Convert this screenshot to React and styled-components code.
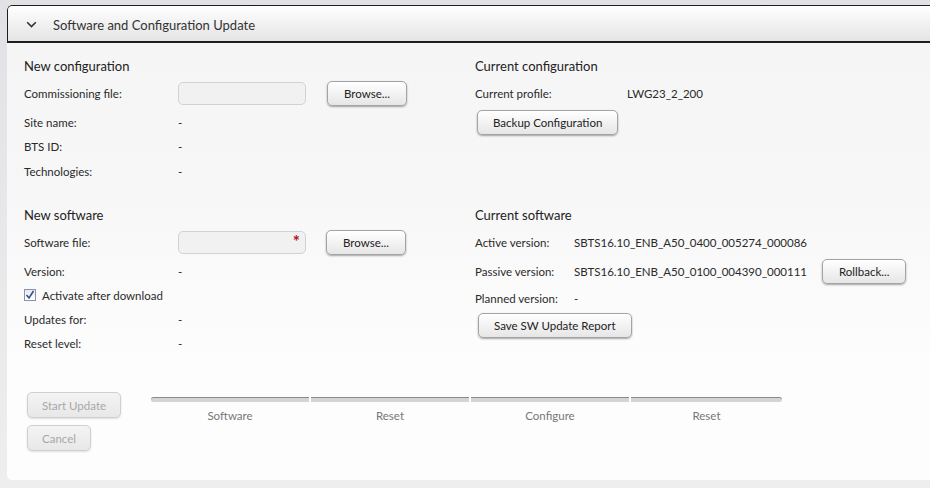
import React from "react";
import styled, { createGlobalStyle } from "styled-components";

const Global = createGlobalStyle`
  html, body { margin: 0; padding: 0; }
  body {
    background: linear-gradient(#e2e2e6, #eeeeee);
    font-family: Lato, "Open Sans", sans-serif;
    width: 930px; height: 488px; overflow: hidden;
  }
`;

const Page = styled.div`
  padding: 5px 0 0 7px;
`;

const Panel = styled.section`
  width: 940px;
  border-radius: 5px 0 0 5px;
  background: linear-gradient(#f5f5f5 0%, #f7f7f7 40%, #fdfdfd 75%, #fdfdfd 100%);
  overflow: hidden;
`;

const Header = styled.header`
  box-sizing: border-box;
  height: 38px;
  display: flex;
  align-items: center;
  gap: 16px;
  padding: 2px 0 0 18px;
  border: 1px solid #1e1e1e;
  border-bottom-width: 2px;
  border-right: none;
  border-radius: 5px 0 0 0;
  background: linear-gradient(#ffffff, #e4e4e4);
`;

const Title = styled.h2`
  margin: 0;
  font-weight: 400;
  font-size: 13px;
  color: #333;
`;

const Body = styled.div`
  padding: 13px 0 29px 17px;
`;

const Sections = styled.div`
  display: grid;
  grid-template-columns: 451px 1fr;
  row-gap: 22px;
  align-items: start;
`;

const Column = styled.div`
  display: flex;
  flex-direction: column;
`;

const SectionTitle = styled.h3`
  margin: 0 0 5px;
  height: 20px;
  line-height: 20px;
  font-weight: 400;
  font-size: 13px;
  color: #222;
`;

const Row = styled.div`
  display: grid;
  grid-template-columns: ${(p) => p.$label || 154}px auto;
  align-items: center;
  height: ${(p) => p.$h || 24}px;
  margin-top: ${(p) => p.$mt || 0}px;
  font-size: 11.5px;
  color: #2a2a2a;
`;

const FieldWrap = styled.div`
  display: flex;
  align-items: center;
  gap: ${(p) => p.$gap || 21}px;
`;

const Label = styled.span``;
const Value = styled.span``;

const Input = styled.div`
  position: relative;
  width: 126px;
  height: 21px;
  border: 1px solid #d2d2d2;
  border-radius: 5px;
  background: #f1f1f1;
`;

const Required = styled.span`
  position: absolute;
  right: 5px;
  top: 0px;
  color: #b5121b;
  font-size: 17px;
  font-weight: 700;
  line-height: 20px;
`;

const Button = styled.button`
  height: ${(p) => p.$h || 25}px;
  padding: 0 ${(p) => p.$px || 15}px;
  font-family: inherit;
  font-size: 11.5px;
  white-space: nowrap;
  color: ${(p) => (p.disabled ? "#a8a8a8" : "#222")};
  border: 1px solid ${(p) => (p.disabled ? "#cfcfcf" : "#a4a4a4")};
  border-radius: 5px;
  background: ${(p) =>
    p.disabled ? "linear-gradient(#f4f4f4, #e8e8e8)" : "linear-gradient(#ffffff, #e6e6e6)"};
  box-shadow: 0 1px 2px rgba(0, 0, 0, ${(p) => (p.disabled ? 0.12 : 0.35)});
  cursor: default;
  align-self: ${(p) => p.$self || "auto"};
  margin: ${(p) => p.$m || "0"};
`;

const CheckRow = styled.label`
  display: flex;
  align-items: center;
  gap: 6px;
  height: 24px;
  font-size: 11.5px;
  color: #2a2a2a;
`;

const Box = styled.span`
  width: 10px;
  height: 10px;
  border: 1px solid #8a93ab;
  background: linear-gradient(#e6e9f0, #ffffff);
  display: flex;
  align-items: center;
  justify-content: center;
`;

const Actions = styled.div`
  display: flex;
  align-items: flex-start;
  margin-top: 37px;
  padding-left: 3px;
  gap: 28px;
`;

const ButtonStack = styled.div`
  display: flex;
  flex-direction: column;
  align-items: flex-start;
  gap: 7px;
  width: 96px;
`;

const Steps = styled.div`
  display: flex;
  gap: 2px;
  margin-top: 5px;
`;

const Step = styled.div`
  width: 158px;
  display: flex;
  flex-direction: column;
  align-items: stretch;
`;

const Bar = styled.div`
  height: 4px;
  width: ${(p) => (p.$w ? p.$w + "px" : "auto")};
  align-self: ${(p) => (p.$w ? "flex-start" : "stretch")};
  background: #d4d4d4;
  border-top: 1px solid #8a8a8a;
  border-radius: ${(p) => (p.$first ? "3px 0 0 3px" : p.$end ? "0 3px 3px 0" : "0")};
`;

const StepLabel = styled.span`
  margin-top: 7px;
  font-size: 11.5px;
  color: #777;
  text-align: center;
  width: ${(p) => (p.$w ? p.$w + "px" : "auto")};
`;

const Chevron = () => (
  <svg width="11" height="7" viewBox="0 0 11 7">
    <path d="M1.2 1.2 L5.5 5.5 L9.8 1.2" fill="none" stroke="#333" strokeWidth="1.6" />
  </svg>
);

const Check = () => (
  <svg width="10" height="10" viewBox="0 0 10 10">
    <path d="M1.5 5 L4 8 L8.5 1" fill="none" stroke="#3a4f8c" strokeWidth="1.6" />
  </svg>
);

export default function App() {
  return (
    <>
      <Global />
      <Page>
        <Panel>
          <Header>
            <Chevron />
            <Title>Software and Configuration Update</Title>
          </Header>
          <Body>
            <Sections>
              <Column>
                <SectionTitle>New configuration</SectionTitle>
                <Row $h={25}>
                  <Label>Commissioning file:</Label>
                  <FieldWrap>
                    <Input />
                    <Button $px={16}>Browse...</Button>
                  </FieldWrap>
                </Row>
                <Row $mt={4}>
                  <Label>Site name:</Label>
                  <Value>-</Value>
                </Row>
                <Row>
                  <Label>BTS ID:</Label>
                  <Value>-</Value>
                </Row>
                <Row $mt={1}>
                  <Label>Technologies:</Label>
                  <Value>-</Value>
                </Row>
              </Column>
              <Column>
                <SectionTitle>Current configuration</SectionTitle>
                <Row $label={152}>
                  <Label>Current profile:</Label>
                  <Value>LWG23_2_200</Value>
                </Row>
                <Button $self="flex-start" $m="5px 0 0 2px">Backup Configuration</Button>
              </Column>
              <Column>
                <SectionTitle>New software</SectionTitle>
                <Row $h={25}>
                  <Label>Software file:</Label>
                  <FieldWrap $gap={20}>
                    <Input>
                      <Required>*</Required>
                    </Input>
                    <Button $px={16}>Browse...</Button>
                  </FieldWrap>
                </Row>
                <Row $mt={4}>
                  <Label>Version:</Label>
                  <Value>-</Value>
                </Row>
                <CheckRow>
                  <Box>
                    <Check />
                  </Box>
                  Activate after download
                </CheckRow>
                <Row>
                  <Label>Updates for:</Label>
                  <Value>-</Value>
                </Row>
                <Row>
                  <Label>Reset level:</Label>
                  <Value>-</Value>
                </Row>
              </Column>
              <Column>
                <SectionTitle>Current software</SectionTitle>
                <Row $label={99} $h={25}>
                  <Label>Active version:</Label>
                  <Value>SBTS16.10_ENB_A50_0400_005274_000086</Value>
                </Row>
                <Row $label={99} $h={27} $mt={3}>
                  <Label>Passive version:</Label>
                  <FieldWrap $gap={15}>
                    <Value>SBTS16.10_ENB_A50_0100_004390_000111</Value>
                    <Button $px={16}>Rollback...</Button>
                  </FieldWrap>
                </Row>
                <Row $label={99} $mt={1}>
                  <Label>Planned version:</Label>
                  <Value>-</Value>
                </Row>
                <Button $self="flex-start" $m="3px 0 0 3px">Save SW Update Report</Button>
              </Column>
            </Sections>
            <Actions>
              <ButtonStack>
                <Button disabled $h={26} $px={14}>Start Update</Button>
                <Button disabled $h={26} $px={14}>Cancel</Button>
              </ButtonStack>
              <Steps>
                <Step>
                  <Bar $first />
                  <StepLabel>Software</StepLabel>
                </Step>
                <Step>
                  <Bar />
                  <StepLabel>Reset</StepLabel>
                </Step>
                <Step>
                  <Bar />
                  <StepLabel>Configure</StepLabel>
                </Step>
                <Step>
                  <Bar $end $w={151} />
                  <StepLabel $w={151}>Reset</StepLabel>
                </Step>
              </Steps>
            </Actions>
          </Body>
        </Panel>
      </Page>
    </>
  );
}
